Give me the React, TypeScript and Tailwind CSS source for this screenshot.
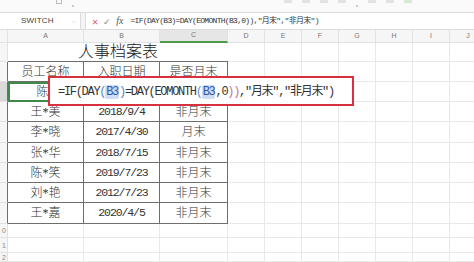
import React from "react";

const colW = ["w-[76px]", "w-[76px]", "w-[68px]", "w-[37px]", "w-[37px]", "w-[37px]", "w-[37px]", "w-[37px]", "w-[37px]", "w-[37px]"];
const letters = ["A", "B", "C", "D", "E", "F", "G", "H", "I", "J"];

const data = [
  { n: 3, h: "h-[20px]", name: "陈*", date: "", end: "", hidden: true },
  { n: 4, h: "h-[20px]", name: "王*美", date: "2018/9/4", end: "非月末" },
  { n: 5, h: "h-[21px]", name: "李*晓", date: "2017/4/30", end: "月末" },
  { n: 6, h: "h-[20px]", name: "张*华", date: "2018/7/15", end: "非月末" },
  { n: 7, h: "h-[20px]", name: "陈*笑", date: "2019/7/23", end: "非月末" },
  { n: 8, h: "h-[20px]", name: "刘*艳", date: "2012/7/23", end: "非月末" },
  { n: 9, h: "h-[21px]", name: "王*嘉", date: "2020/4/5", end: "非月末" },
];

const cjk = { fontFamily: '"Liberation Serif", "Noto Sans CJK SC", serif' };
const mono = { fontFamily: '"Liberation Mono", "Noto Sans CJK SC", monospace' };

// row header column is cropped: only the last digit of two-digit numbers peeks in
function RowHead({ digit, active }: { digit?: string; active?: boolean }) {
  return (
    <div
      className={`w-[8px] shrink-0 overflow-hidden border-r border-b border-[#e2e2e2] flex items-center text-[7px] leading-none text-[#888] ${active ? "bg-[#d9d9d9]" : "bg-[#f6f6f6]"}`}
      style={{ fontFamily: '"Liberation Sans", sans-serif' }}
    >
      {digit && <span className="ml-[2px]">{digit}</span>}
    </div>
  );
}

function EmptyCells({ from, h }: { from: number; h: string }) {
  return (
    <>
      {colW.slice(from).map((w, i) => (
        <div key={i} className={`${w} ${h} shrink-0 border-r border-b border-[#e8e8e8]`} />
      ))}
    </>
  );
}

function Tok({ children, c }: { children: React.ReactNode; c?: string }) {
  return <span className={c}>{children}</span>;
}

export default function App() {
  return (
    <div className="relative w-[474px] h-[262px] overflow-hidden bg-white text-[#333]">
      {/* toolbar remnant */}
      <div className="h-[12px] bg-[#fafafa] flex items-start gap-[10px] pl-[56px]">
        <div className="w-[6px] h-[4px] border border-t-0 border-[#bbb]" />
        <div className="mt-[5px] w-[2px] h-[2px] bg-[#ccc]" />
        <div className="ml-[200px] w-[8px] h-[3px] bg-[#e2e2e2]" />
        <div className="w-[8px] h-[3px] bg-[#e2e2e2]" />
        <div className="w-[8px] h-[3px] bg-[#e2e2e2]" />
        <div className="w-[8px] h-[3px] bg-[#e2e2e2]" />
        <div className="mt-[5px] w-[2px] h-[2px] bg-[#ccc]" />
        <div className="w-[8px] h-[3px] bg-[#e2e2e2]" />
        <div className="w-[8px] h-[3px] bg-[#e2e2e2]" />
        <div className="w-[8px] h-[3px] bg-[#d8e8d8]" />
      </div>

      {/* formula bar */}
      <div className="h-[18px] flex bg-[#f4f4f4] border-y border-[#dcdcdc]">
        <div
          className="w-[81px] shrink-0 bg-white border-r border-[#dcdcdc] flex items-center text-[8px] text-[#444]"
          style={{ fontFamily: '"Liberation Sans", sans-serif' }}
        >
          <span className="ml-[21px] tracking-[0.2px]">SWITCH</span>
          <span className="ml-auto mr-[4px] text-[7px] text-[#999]">⌵</span>
        </div>
        <div className="ml-[4px] flex-1 bg-white border-l border-[#dcdcdc] flex items-center">
          <span className="ml-[6px] text-[11px] leading-none text-[#e2606b]">×</span>
          <span className="ml-[5px] text-[9px] leading-none text-[#888]">✓</span>
          <span
            className="ml-[5px] text-[10px] italic leading-none text-[#555]"
            style={{ fontFamily: '"Liberation Serif", serif' }}
          >
            fx
          </span>
          <span className="ml-[7px] text-[8px] tracking-[-0.7px] text-[#333] whitespace-nowrap" style={mono}>
            =IF(DAY(B3)=DAY(EOMONTH(B3,0)),"月末","非月末")
          </span>
        </div>
      </div>

      {/* column headers */}
      <div className="h-[13px] flex bg-[#f6f6f6]">
        <div className="w-[8px] shrink-0 border-r border-b border-[#e2e2e2]" />
        {letters.map((l, i) => (
          <div
            key={l}
            className={`${colW[i]} shrink-0 flex items-center justify-center text-[7px] text-[#777] border-r border-[#e2e2e2] ${i === 2 ? "bg-[#e6e6e6] border-b-2 border-b-[#4b9b4b]" : "border-b"}`}
            style={{ fontFamily: '"Liberation Sans", sans-serif' }}
          >
            {l}
          </div>
        ))}
      </div>

      {/* row 1: merged title */}
      <div className="h-[19px] flex">
        <RowHead />
        <div
          className="w-[220px] shrink-0 flex items-center justify-center text-[16px] leading-none text-[#222] font-light border-b border-[#6e6e6e]"
          style={cjk}
        >
          人事档案表
        </div>
        <EmptyCells from={3} h="h-[19px]" />
      </div>

      {/* row 2: header */}
      <div className="h-[20px] flex text-[12px] font-light" style={cjk}>
        <div className="w-[8px] shrink-0 bg-[#f6f6f6] border-r border-r-[#6e6e6e] border-b border-b-[#e2e2e2]" />
        {["员工名称", "入职日期", "是否月末"].map((t, i) => (
          <div
            key={t}
            className={`${colW[i]} shrink-0 flex items-center justify-center border-r border-b border-[#6e6e6e]`}
          >
            {t}
          </div>
        ))}
        <EmptyCells from={3} h="h-[20px]" />
      </div>

      {/* data rows */}
      {data.map((r) => (
        <div key={r.n} className={`${r.h} flex text-[12px] font-light`}>
          <div
            className={`w-[8px] shrink-0 border-r border-r-[#6e6e6e] border-b border-b-[#e2e2e2] ${r.hidden ? "bg-[#d9d9d9]" : "bg-[#f6f6f6]"}`}
          />
          <div
            className={`${colW[0]} shrink-0 flex items-center justify-center border-r border-b border-[#6e6e6e] ${r.hidden ? "outline-2 outline-[#3f8a4b] -outline-offset-2" : ""}`}
            style={cjk}
          >
            {r.name}
          </div>
          <div
            className={`${colW[1]} shrink-0 flex items-center justify-center border-r border-b border-[#6e6e6e] tracking-[-1.1px] text-[11.5px] text-[#333]`}
            style={mono}
          >
            {r.date}
          </div>
          <div className={`${colW[2]} shrink-0 flex items-center justify-center border-r border-b border-[#6e6e6e]`} style={cjk}>
            {r.end}
          </div>
          <EmptyCells from={3} h={r.h} />
        </div>
      ))}

      {/* empty rows below the table */}
      {[
        { d: "0", h: "h-[14px]" },
        { d: "1", h: "h-[15px]" },
        { d: "2", h: "h-[9px]" },
      ].map((r) => (
        <div key={r.d} className={`${r.h} flex`}>
          <RowHead digit={r.d} />
          <EmptyCells from={0} h={r.h} />
        </div>
      ))}

      {/* in-cell formula editor, boxed in red */}
      <div className="absolute left-[48px] top-[76px] w-[306px] h-[30px] border-2 border-[#d7313d] bg-white flex items-center">
        <div
          className="ml-[8px] mt-[1px] text-[12px] tracking-[-1.3px] text-[#333] whitespace-nowrap leading-none"
          style={mono}
        >
          <Tok>=IF(DAY</Tok>
          <Tok c="text-[#5a7fc4]">(</Tok>
          <Tok c="bg-[#cfdcf3] text-[#2d57a8] rounded-[2px] px-[1px]">B3</Tok>
          <Tok c="text-[#5a7fc4]">)</Tok>
          <Tok>=DAY(EOMONTH</Tok>
          <Tok c="text-[#6a8fd0]">(</Tok>
          <Tok c="bg-[#cfdcf3] text-[#2d57a8] rounded-[2px] px-[1px]">B3</Tok>
          <Tok>,0</Tok>
          <Tok c="text-[#c9758c]">))</Tok>
          <Tok>,"月末","非月末")</Tok>
        </div>
      </div>
    </div>
  );
}
